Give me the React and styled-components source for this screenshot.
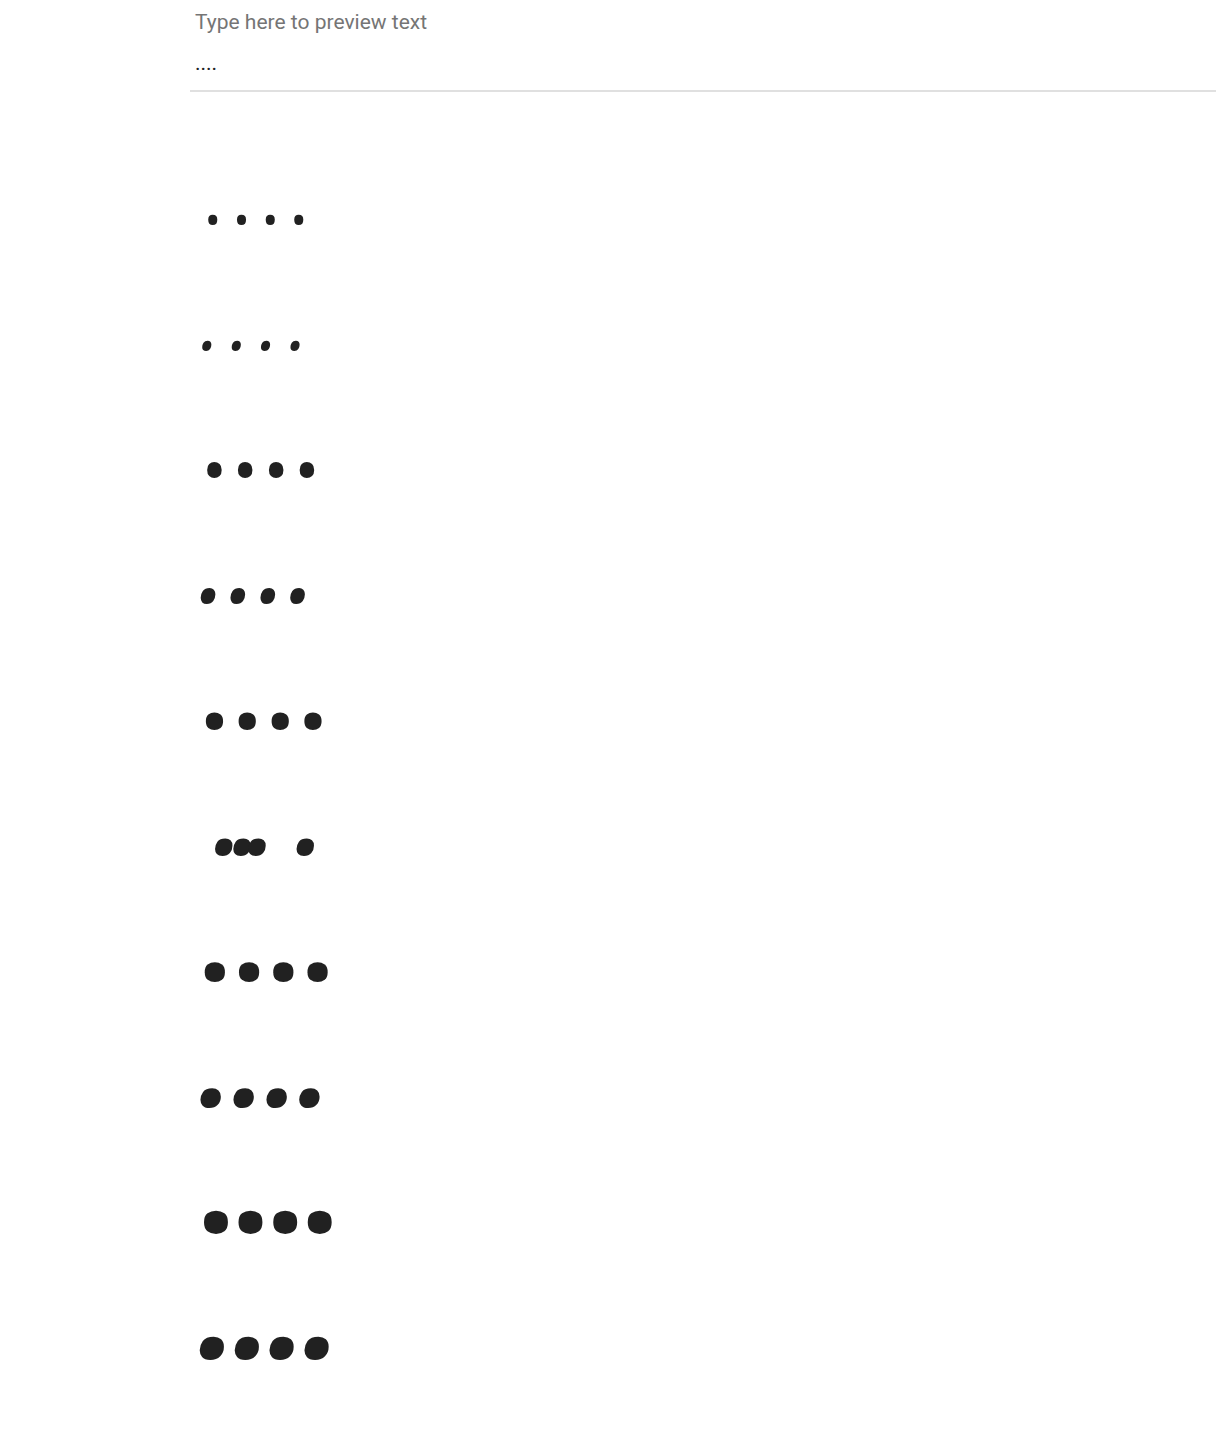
import React from 'react'
import styled, { createGlobalStyle } from 'styled-components'

const Global = createGlobalStyle`
  body {
    margin: 0;
    background: #fff;
    font-family: Roboto, "Noto Sans", sans-serif;
  }
`;

const Page = styled.div`
  padding-left: 190px;
  width: 1026px;
`;

const Field = styled.div`
  border-bottom: 2px solid #e0e0e0;
  padding: 8px 0 0 5px;
  height: 92px;
  box-sizing: border-box;
`;

const Label = styled.div`
  font-size: 21px;
  color: #757575;
  line-height: 28px;
`;

const Value = styled.div`
  margin-top: 15px;
  font-size: 21px;
  color: #202124;
  line-height: 24px;
`;

const List = styled.div`
  display: flex;
  flex-direction: column;
  padding-top: 29px;
`;

const Row = styled.div`
  height: 125.3px;
  box-sizing: border-box;
  flex: none;
  display: flex;
  align-items: flex-end;
  padding-left: ${p => p.$left}px;
  padding-bottom: ${p => p.$lift}px;
  font-family: "Open Sans", sans-serif;
  font-size: ${p => p.$size}px;
  font-weight: ${p => p.$weight};
  font-style: ${p => (p.$italic ? 'italic' : 'normal')};
  letter-spacing: ${p => p.$space}px;
  color: #212121;
  line-height: 1;
  white-space: pre;
`;

const Dot = styled.span`
  letter-spacing: ${p => p.$space}px;
`;

const rows = [
  { weight: 300, italic: false, size: 115, space: 1.3, left: 9, lift: 9 },
  { weight: 300, italic: true, size: 115, space: 3.3, left: 9, lift: 9 },
  { weight: 400, italic: false, size: 125, space: -2, left: 8, lift: 7 },
  { weight: 400, italic: true, size: 125, space: -1.5, left: 8, lift: 6 },
  { weight: 600, italic: false, size: 120, space: 0, left: 8, lift: 5 },
  { weight: 600, italic: true, size: 120, space: 0, left: 23, lift: 5, gaps: [-14, -17, 16] },
  { weight: 700, italic: false, size: 118, space: 0.6, left: 8, lift: 4 },
  { weight: 700, italic: true, size: 118, space: -0.7, left: 9, lift: 3 },
  { weight: 700, italic: false, size: 140, space: -5.3, left: 6, lift: 1 },
  { weight: 700, italic: true, size: 140, space: -5, left: 8, lift: 0 },
]

export default function App() {
  return (
    <Page>
      <Global />
      <Field>
        <Label>Type here to preview text</Label>
        <Value>....</Value>
      </Field>
      <List>
        {rows.map((r, i) => (
          <Row
            key={i}
            $weight={r.weight}
            $italic={r.italic}
            $size={r.size}
            $space={r.space}
            $left={r.left}
            $lift={r.lift}
          >
            {r.gaps
              ? ['.', '.', '.', '.'].map((c, j) => (
                  <Dot key={j} $space={r.gaps[j] ?? 0}>{c}</Dot>
                ))
              : '....'}
          </Row>
        ))}
      </List>
    </Page>
  )
}
